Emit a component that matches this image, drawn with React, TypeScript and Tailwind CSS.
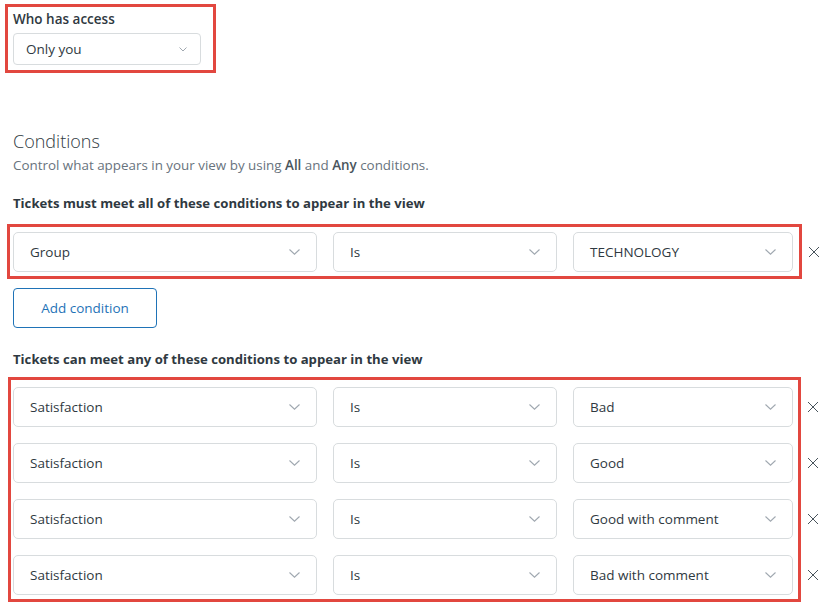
import React from 'react'

const font = { fontFamily: '"Open Sans", "Noto Sans", Arial, sans-serif' }

function Chevron({ small }: { small?: boolean }) {
  return small ? (
    <svg width="8" height="5" viewBox="0 0 8 5" className="shrink-0">
      <path d="M0.5 0.5 L4 4 L7.5 0.5" fill="none" stroke="#a0a8b0" strokeWidth="1" />
    </svg>
  ) : (
    <svg width="11" height="6" viewBox="0 0 11 6" className="shrink-0">
      <path d="M0.5 0.5 L5.5 5.2 L10.5 0.5" fill="none" stroke="#a0a8b0" strokeWidth="1.1" />
    </svg>
  )
}

function Select({ value, width }: { value: string; width: string }) {
  return (
    <div
      className={`${width} h-10 shrink-0 flex items-center justify-between rounded-[5px] border border-[#d8dcde] bg-white pl-[16px] pr-[16px] text-[13.5px] text-[#2f3941]`}
    >
      <span>{value}</span>
      <Chevron />
    </div>
  )
}

function Remove() {
  return (
    <svg width="12" height="12" viewBox="0 0 12 12" className="shrink-0">
      <path d="M1 1 L11 11 M11 1 L1 11" stroke="#49545c" strokeWidth="1" fill="none" />
    </svg>
  )
}

function Row({ field, op, value }: { field: string; op: string; value: string }) {
  return (
    <div className="flex gap-4">
      <Select value={field} width="w-[304px]" />
      <Select value={op} width="w-[224px]" />
      <Select value={value} width="w-[220px]" />
    </div>
  )
}

export default function App() {
  const anyRows = ['Bad', 'Good', 'Good with comment', 'Bad with comment']
  return (
    <div className="min-h-screen bg-white text-[#2f3941]" style={font}>
      <div className="pt-[4px]">
        <div className="ml-[5px] w-[211px] border-[3px] border-[#e2473f] pl-[5px] pt-[2px] pb-[5px]">
          <div className="text-[13.5px] font-semibold leading-5">Who has access</div>
          <div className="mt-[4px] flex h-8 w-[188px] items-center justify-between rounded-[4px] border border-[#d8dcde] pl-[12px] pr-[13px] text-[13.5px]">
            <span>Only you</span>
            <Chevron small />
          </div>
        </div>
      </div>

      <div className="ml-[13px] mt-[56px]">
        <h2 className="text-[18px] font-light leading-6 text-[#2f3941]">Conditions</h2>
        <p className="mt-[2px] text-[13.4px] leading-5 text-[#68737d]">
          Control what appears in your view by using <b className="font-semibold text-[#49545c]">All</b> and{' '}
          <b className="font-semibold text-[#49545c]">Any</b> conditions.
        </p>
        <div className="mt-[18px] text-[13.15px] font-bold leading-5">
          Tickets must meet all of these conditions to appear in the view
        </div>
      </div>

      <div className="mt-[11px] flex items-center">
        <div className="ml-[7px] w-[795px] border-[3px] border-[#e2473f] px-[3px] pt-[5px] pb-[4px]">
          <Row field="Group" op="Is" value="TECHNOLOGY" />
        </div>
        <div className="ml-[6px]">
          <Remove />
        </div>
      </div>

      <button className="ml-[13px] mt-[9px] h-10 w-[144px] rounded-[4px] border border-[#1f73b7] text-[13.5px] text-[#1f73b7]">
        Add condition
      </button>

      <div className="ml-[13px] mt-[21px] text-[13.15px] font-bold leading-5">
        Tickets can meet any of these conditions to appear in the view
      </div>

      <div className="mt-[8px] flex">
        <div className="ml-[8px] w-[793px] border-[3px] border-[#e2473f] pl-[2px] pt-[7px] pb-[4px] flex flex-col gap-4">
          {anyRows.map((v) => (
            <Row key={v} field="Satisfaction" op="Is" value={v} />
          ))}
        </div>
        <div className="ml-[6px] flex flex-col gap-[44px] pt-[24px]">
          {anyRows.map((v) => (
            <Remove key={v} />
          ))}
        </div>
      </div>
    </div>
  )
}
